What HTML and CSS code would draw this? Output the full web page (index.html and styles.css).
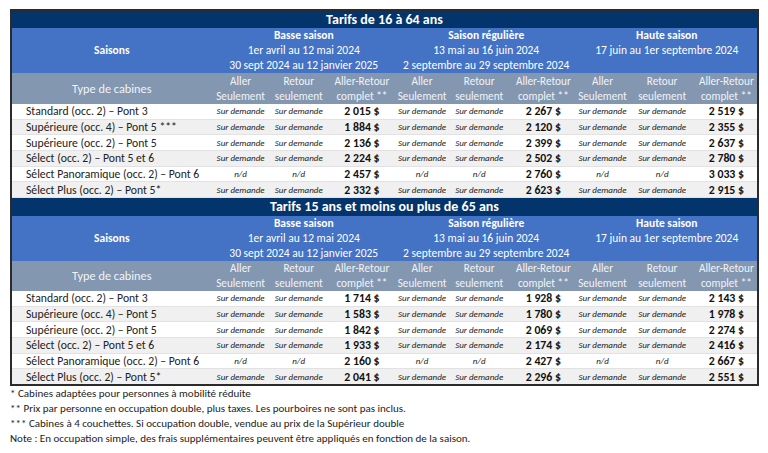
FILE: index.html
```html
<!DOCTYPE html>
<html lang="fr">
<head>
<meta charset="utf-8">
<link rel="stylesheet" href="styles.css">
<title>Tarifs</title>
</head>
<body>
<div class="page">
<table class="rates">
  <colgroup>
    <col class="c0"><col class="c1"><col class="c2"><col class="c3"><col class="c4"><col class="c5"><col class="c6"><col class="c7"><col class="c8"><col class="c9">
  </colgroup>
  <tbody class="sec sec1">
    <tr class="title"><th colspan="10">Tarifs de 16 à 64 ans</th></tr>
    <tr class="seasons">
      <th class="lbl">Saisons</th>
      <th colspan="3"><b>Basse saison</b><br>1er avril au 12 mai 2024<br>30 sept 2024 au 12 janvier 2025</th>
      <th colspan="3"><b>Saison régulière</b><br>13 mai au 16 juin 2024<br>2 septembre au 29 septembre 2024</th>
      <th colspan="3" class="top"><b>Haute saison</b><br>17 juin au 1er septembre 2024</th>
    </tr>
    <tr class="cols">
      <th class="type">Type de cabines</th>
      <th>Aller<br>Seulement</th><th>Retour<br>seulement</th><th>Aller-Retour<br>complet **</th>
      <th>Aller<br>Seulement</th><th>Retour<br>seulement</th><th>Aller-Retour<br>complet **</th>
      <th>Aller<br>Seulement</th><th>Retour<br>seulement</th><th>Aller-Retour<br>complet **</th>
    </tr>
    <tr class="row"><td class="name">Standard (occ. 2) – Pont 3</td><td class="sd">Sur demande</td><td class="sd">Sur demande</td><td class="pr">2 015 $</td><td class="sd">Sur demande</td><td class="sd">Sur demande</td><td class="pr">2 267 $</td><td class="sd">Sur demande</td><td class="sd">Sur demande</td><td class="pr">2 519 $</td></tr>
    <tr class="row alt"><td class="name">Supérieure (occ. 4) – Pont 5 ***</td><td class="sd">Sur demande</td><td class="sd">Sur demande</td><td class="pr">1 884 $</td><td class="sd">Sur demande</td><td class="sd">Sur demande</td><td class="pr">2 120 $</td><td class="sd">Sur demande</td><td class="sd">Sur demande</td><td class="pr">2 355 $</td></tr>
    <tr class="row"><td class="name">Supérieure (occ. 2) – Pont 5</td><td class="sd">Sur demande</td><td class="sd">Sur demande</td><td class="pr">2 136 $</td><td class="sd">Sur demande</td><td class="sd">Sur demande</td><td class="pr">2 399 $</td><td class="sd">Sur demande</td><td class="sd">Sur demande</td><td class="pr">2 637 $</td></tr>
    <tr class="row alt"><td class="name">Sélect (occ. 2) – Pont 5 et 6</td><td class="sd">Sur demande</td><td class="sd">Sur demande</td><td class="pr">2 224 $</td><td class="sd">Sur demande</td><td class="sd">Sur demande</td><td class="pr">2 502 $</td><td class="sd">Sur demande</td><td class="sd">Sur demande</td><td class="pr">2 780 $</td></tr>
    <tr class="row"><td class="name">Sélect Panoramique (occ. 2) – Pont 6</td><td class="sd">n/d</td><td class="sd">n/d</td><td class="pr">2 457 $</td><td class="sd">n/d</td><td class="sd">n/d</td><td class="pr">2 760 $</td><td class="sd">n/d</td><td class="sd">n/d</td><td class="pr">3 033 $</td></tr>
    <tr class="row alt"><td class="name">Sélect Plus (occ. 2) – Pont 5*</td><td class="sd">Sur demande</td><td class="sd">Sur demande</td><td class="pr">2 332 $</td><td class="sd">Sur demande</td><td class="sd">Sur demande</td><td class="pr">2 623 $</td><td class="sd">Sur demande</td><td class="sd">Sur demande</td><td class="pr">2 915 $</td></tr>
  </tbody>
  <tbody class="sec sec2">
    <tr class="title"><th colspan="10">Tarifs 15 ans et moins ou plus de 65 ans</th></tr>
    <tr class="seasons">
      <th class="lbl">Saisons</th>
      <th colspan="3"><b>Basse saison</b><br>1er avril au 12 mai 2024<br>30 sept 2024 au 12 janvier 2025</th>
      <th colspan="3"><b>Saison régulière</b><br>13 mai au 16 juin 2024<br>2 septembre au 29 septembre 2024</th>
      <th colspan="3" class="top"><b>Haute saison</b><br>17 juin au 1er septembre 2024</th>
    </tr>
    <tr class="cols">
      <th class="type">Type de cabines</th>
      <th>Aller<br>Seulement</th><th>Retour<br>seulement</th><th>Aller-Retour<br>complet **</th>
      <th>Aller<br>Seulement</th><th>Retour<br>seulement</th><th>Aller-Retour<br>complet **</th>
      <th>Aller<br>Seulement</th><th>Retour<br>seulement</th><th>Aller-Retour<br>complet **</th>
    </tr>
    <tr class="row"><td class="name">Standard (occ. 2) – Pont 3</td><td class="sd">Sur demande</td><td class="sd">Sur demande</td><td class="pr">1 714 $</td><td class="sd">Sur demande</td><td class="sd">Sur demande</td><td class="pr">1 928 $</td><td class="sd">Sur demande</td><td class="sd">Sur demande</td><td class="pr">2 143 $</td></tr>
    <tr class="row alt"><td class="name">Supérieure (occ. 4) – Pont 5</td><td class="sd">Sur demande</td><td class="sd">Sur demande</td><td class="pr">1 583 $</td><td class="sd">Sur demande</td><td class="sd">Sur demande</td><td class="pr">1 780 $</td><td class="sd">Sur demande</td><td class="sd">Sur demande</td><td class="pr">1 978 $</td></tr>
    <tr class="row"><td class="name">Supérieure (occ. 2) – Pont 5</td><td class="sd">Sur demande</td><td class="sd">Sur demande</td><td class="pr">1 842 $</td><td class="sd">Sur demande</td><td class="sd">Sur demande</td><td class="pr">2 069 $</td><td class="sd">Sur demande</td><td class="sd">Sur demande</td><td class="pr">2 274 $</td></tr>
    <tr class="row alt"><td class="name">Sélect (occ. 2) – Pont 5 et 6</td><td class="sd">Sur demande</td><td class="sd">Sur demande</td><td class="pr">1 933 $</td><td class="sd">Sur demande</td><td class="sd">Sur demande</td><td class="pr">2 174 $</td><td class="sd">Sur demande</td><td class="sd">Sur demande</td><td class="pr">2 416 $</td></tr>
    <tr class="row"><td class="name">Sélect Panoramique (occ. 2) – Pont 6</td><td class="sd">n/d</td><td class="sd">n/d</td><td class="pr">2 160 $</td><td class="sd">n/d</td><td class="sd">n/d</td><td class="pr">2 427 $</td><td class="sd">n/d</td><td class="sd">n/d</td><td class="pr">2 667 $</td></tr>
    <tr class="row alt"><td class="name">Sélect Plus (occ. 2) – Pont 5*</td><td class="sd">Sur demande</td><td class="sd">Sur demande</td><td class="pr">2 041 $</td><td class="sd">Sur demande</td><td class="sd">Sur demande</td><td class="pr">2 296 $</td><td class="sd">Sur demande</td><td class="sd">Sur demande</td><td class="pr">2 551 $</td></tr>
  </tbody>
</table>
<div class="notes">
  <p>* Cabines adaptées pour personnes à mobilité réduite</p>
  <p>** Prix par personne en occupation double, plus taxes. Les pourboires ne sont pas inclus.</p>
  <p>*** Cabines à 4 couchettes. Si occupation double, vendue au prix de la Supérieur double</p>
  <p>Note : En occupation simple, des frais supplémentaires peuvent être appliqués en fonction de la saison.</p>
</div>
</div>
</body>
</html>
```

FILE: styles.css
```css
html, body {
  margin: 0;
  padding: 0;
  background: #ffffff;
}
body {
  font-family: Carlito, Calibri, Lato, "Liberation Sans", sans-serif;
  color: #1e1e1e;
}
.page {
  padding: 9px 9px 0 10px;
}
.rates {
  width: 749px;
  border-collapse: collapse;
  table-layout: fixed;
  border: 2px solid #2b2b2b;
}
.c0 { width: 200px; }
.c1 { width: 58px; }
.c2 { width: 58px; }
.c3 { width: 68px; }
.c4 { width: 52px; }
.c5 { width: 62px; }
.c6 { width: 66px; }
.c7 { width: 52px; }
.c8 { width: 67px; }
.c9 { width: 62px; }

.rates th, .rates td {
  padding: 0;
  white-space: nowrap;
  overflow: hidden;
}
.title th {
  background: #03346b;
  color: #ffffff;
  font-size: 14px;
  font-weight: 700;
  height: 17px;
  line-height: 17px;
  text-align: center;
}
.sec2 .title th { height: 18px; line-height: 18px; }
.seasons th {
  background: #4472c4;
  color: #ffffff;
  font-size: 11.5px;
  font-weight: 400;
  line-height: 15px;
  height: 45px;
  text-align: center;
  vertical-align: top;
}
.seasons th b { font-weight: 700; }
.seasons th.lbl {
  font-weight: 700;
  vertical-align: middle;
}
.cols th {
  background: #8497b0;
  color: #f0f3f8;
  font-size: 11.2px;
  font-weight: 400;
  line-height: 15px;
  height: 31px;
  text-align: center;
  vertical-align: middle;
}
.cols th.type {
  font-size: 12.3px;
}
.sec2 .cols th { height: 30px; }
.row td {
  height: 14.67px;
  line-height: 14px;
  border-bottom: 1px solid #e2e2e2;
  text-align: center;
  vertical-align: middle;
}
.row.alt td { background: #f0f0f0; }
.row td.name {
  text-align: left;
  padding-left: 14px;
  font-size: 11.7px;
  color: #222222;
}
.row td.sd {
  font-size: 9px;
  font-style: italic;
  color: #222222;
}
.row td.pr {
  font-size: 11.8px;
  font-weight: 700;
  color: #111111;
}
.notes {
  padding-top: 0;
}
.notes p {
  margin: 0;
  font-size: 11px;
  line-height: 15px;
  color: #222222;
}
```
